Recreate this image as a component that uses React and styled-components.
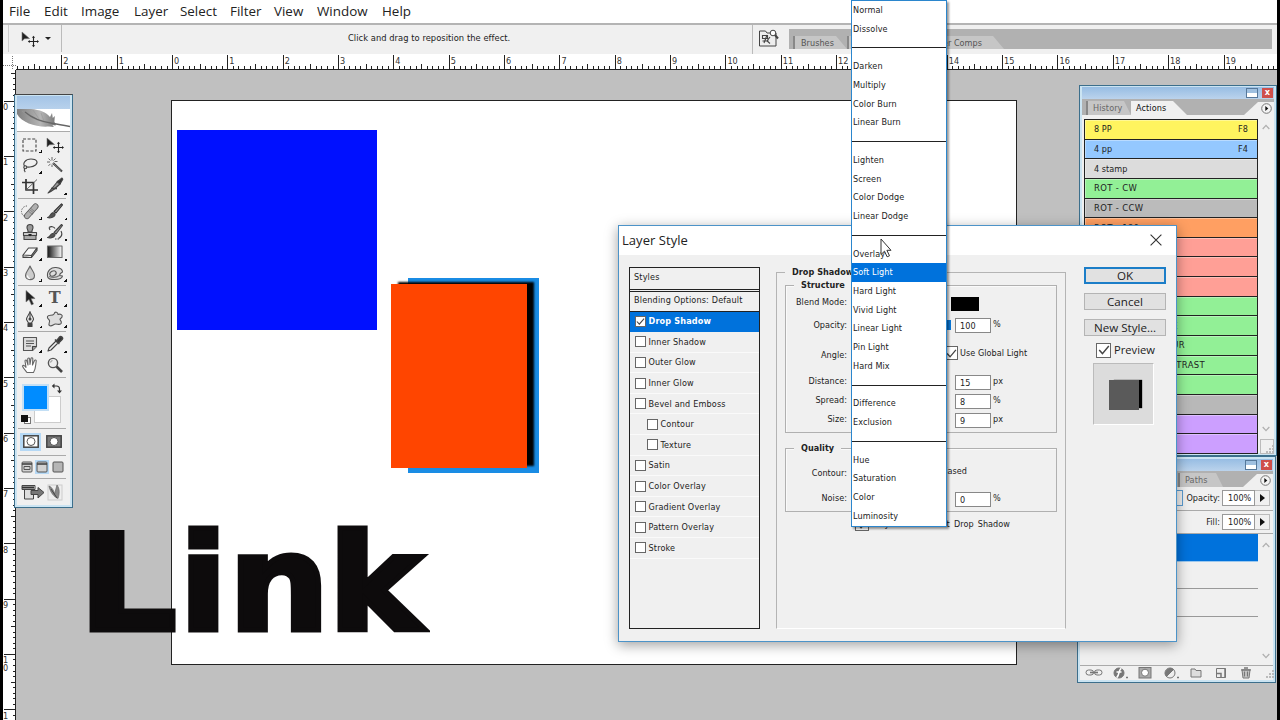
import styled, { createGlobalStyle, css } from 'styled-components';

const UI = "'DejaVu Sans Condensed', 'DejaVu Sans', Verdana, sans-serif";
const SEGOE = "'Open Sans', 'Noto Sans', sans-serif";

const menus = [
  ['File', 35], ['Edit', 37], ['Image', 53], ['Layer', 46], ['Select', 50],
  ['Filter', 44], ['View', 43], ['Window', 65], ['Help', 40],
];

const blendModes = [
  'Normal', 'Dissolve', null,
  'Darken', 'Multiply', 'Color Burn', 'Linear Burn', null,
  'Lighten', 'Screen', 'Color Dodge', 'Linear Dodge', null,
  'Overlay', 'Soft Light', 'Hard Light', 'Vivid Light', 'Linear Light', 'Pin Light', 'Hard Mix', null,
  'Difference', 'Exclusion', null,
  'Hue', 'Saturation', 'Color', 'Luminosity',
];

const effects = [
  { name: 'Drop Shadow', active: true },
  { name: 'Inner Shadow' },
  { name: 'Outer Glow' },
  { name: 'Inner Glow' },
  { name: 'Bevel and Emboss' },
  { name: 'Contour', nested: true },
  { name: 'Texture', nested: true },
  { name: 'Satin' },
  { name: 'Color Overlay' },
  { name: 'Gradient Overlay' },
  { name: 'Pattern Overlay' },
  { name: 'Stroke' },
];

const actions = [
  { name: '8 PP', hotkey: 'F8', color: '#fff45f' },
  { name: '4 pp', hotkey: 'F4', color: '#94c8ff' },
  { name: '4 stamp', color: '#dcdcdc' },
  { name: 'ROT - CW', wide: true, color: '#92f096' },
  { name: 'ROT - CCW', wide: true, color: '#bbbbbb' },
  { name: 'ROT - 180', wide: true, color: '#ff9f62' },
  { color: '#ff9f96' },
  { color: '#ff9f96' },
  { color: '#ff9f96' },
  { color: '#92f096' },
  { name: 'AUTO TONE', wide: true, end: 84, color: '#92f096' },
  { name: 'AUTO COLOUR', wide: true, end: 91, color: '#92f096' },
  { name: 'AUTO CONTRAST', wide: true, end: 111, color: '#92f096' },
  { color: '#92f096' },
  { color: '#b8b8b8' },
  { color: '#cc9fff' },
  { color: '#cc9fff' },
];

/* ---------- icons ---------- */

const Icon = ({ children, size = 18 }) => (
  <svg width={size} height={size} viewBox="0 0 18 18" fill="none" stroke="#444" strokeWidth="1.1" strokeLinejoin="round">
    {children}
  </svg>
);

const MarqueeIcon = () => <Icon><rect x="2" y="3" width="13" height="12" strokeDasharray="3 1.6" /></Icon>;

const MoveIcon = () => (
  <Icon>
    <path d="M1 2v9l2.500-2.200L8.500 8.500z" fill="#222" stroke="#777" strokeWidth=".6" />
    <path d="M12.500 7v9M8 11.500h9" stroke="#222" />
    <path d="M12.500 5.800l1.600 2h-3.200zM12.500 17.200l1.600-2h-3.200zM6.800 11.500l2-1.600v3.200zM18 11.500l-2-1.600v3.200z" fill="#222" stroke="none" />
  </Icon>
);

const LassoIcon = () => (
  <Icon>
    <path d="M4 10.500C1 7.500 4.500 3 10 3c6 0 7.500 3.500 4.500 6-3 2.300-8 2.800-10.500 1.200" stroke="#444" />
    <circle cx="4.300" cy="11.200" r="1.500" fill="#ddd" />
    <path d="M3.500 12.800c-.5 1-.4 2 .8 3.200" />
  </Icon>
);

const WandIcon = () => (
  <Icon>
    <path d="M7 7l9 8.500" stroke="#333" strokeWidth="2" />
    <path d="M7 7l8.500 8" stroke="#bbb" strokeWidth=".6" />
    <path d="M6 1v3.500M6 8.500V11M1 6h3M8.500 5.500h3M2.500 2.500l2 2M9.500 2.500l-2 2M4.500 7.800l-2 2" stroke="#555" strokeWidth=".9" />
  </Icon>
);

const CropIcon = () => (
  <Icon>
    <path d="M5 2v11h12M1 5.500h11.500V17" stroke="#333" strokeWidth="1.700" />
    <path d="M5 13L16 2.500" stroke="#555" strokeWidth=".9" />
  </Icon>
);

const SliceIcon = () => (
  <Icon>
    <path d="M2 16L12 4l2.500 2.500C11 10 7 13.500 2 16z" fill="#999" />
    <path d="M11 5l5-4 .8 1.200L14 7z" fill="#333" />
    <path d="M5 11.500h6" strokeWidth="1.600" />
  </Icon>
);

const HealIcon = () => (
  <Icon>
    <path d="M6 4a4.500 4.500 0 0 0 0 11" strokeDasharray="1.300 1.300" strokeWidth=".9" />
    <path d="M6 14L14.500 4.500" stroke="#555" strokeWidth="6" strokeLinecap="round" />
    <path d="M6 14L14.500 4.500" stroke="#b0b0b0" strokeWidth="4.500" strokeLinecap="round" />
    <path d="M8.500 7.500l4.500 3.800M7.300 9l4.500 3.800M9.700 6.300l4.300 3.700" stroke="#777" strokeWidth=".8" />
  </Icon>
);

const BrushIcon = () => (
  <Icon>
    <path d="M8 9.500L15.500 1.800l1 1L10 11z" fill="#999" stroke="#333" />
    <path d="M1.500 15.500c2.500-.3 2.500-3.500 5-4.700 1.500-.5 3 .9 2.500 2.300-1 2.600-5 3.200-7.500 2.400z" fill="#555" />
  </Icon>
);

const StampIcon = () => (
  <Icon>
    <path d="M7 9c.5-2-1.300-3-1-5 .3-3.300 5.700-3.300 6 0 .3 2-1.500 3-1 5z" fill="#999" />
    <path d="M2.500 9.500h13v3h-13z" fill="#ccc" />
    <path d="M3 13v3.500h12V13" fill="#aaa" />
    <path d="M7 11h4l-2 2.500z" fill="#222" stroke="none" />
  </Icon>
);

const HistoryBrushIcon = () => (
  <Icon>
    <path d="M8 9.500L15.500 1.500l1 1L10 11z" fill="#999" />
    <path d="M1.500 14.500c2.500-.3 2.500-3 5-3.900 1.500-.3 3 .9 2.300 2-1.200 2-5 2.700-7.300 1.900z" fill="#555" />
    <path d="M3 4.500c2-1.500 5-1 6 1M3 4.500l2.800-1M3 4.500l1 2.500M15 8c1.500 3 .5 6-2.500 7.500" stroke="#444" />
    <path d="M9 16h5" strokeDasharray="1.500 1" />
  </Icon>
);

const EraserIcon = () => (
  <Icon>
    <path d="M2 12l5.500-7H16l-5 7.500z" fill="#f7f7f7" />
    <path d="M2 12v2.500h8.500V12.300L16 5v2.500l-5.500 7" fill="#aaa" />
  </Icon>
);

const GradientIcon = () => (
  <Icon>
    <defs>
      <linearGradient id="toolGrad"><stop offset="0" stopColor="#111" /><stop offset="1" stopColor="#fff" /></linearGradient>
    </defs>
    <rect x="1.500" y="3" width="14.500" height="11.500" fill="url(#toolGrad)" stroke="#666" />
  </Icon>
);

const BlurIcon = () => (
  <Icon>
    <path d="M9 2c1.500 4 4.500 6 4.500 9.500 0 5.500-9 5.500-9 0C4.500 8 7.500 6 9 2z" fill="#ccc" stroke="#666" />
    <path d="M6.500 11.500c0 2 1 3 2.500 3.200" stroke="#fff" />
  </Icon>
);

const SpongeIcon = () => (
  <Icon>
    <path d="M1.500 12C1 7 5 3 10 3.500c4 .4 6.500 2 6.500 4.500-2 1-3 1.500-3 3.500l3 .5c-.5 3-4 3.500-8 3.500s-7-.5-7-3.500z" fill="#ddd" stroke="#555" />
    <ellipse cx="7" cy="9.500" rx="3.300" ry="2.400" stroke="#555" transform="rotate(-25 7 9.500)" />
    <path d="M3 12.500c4 1.500 7 1.500 10.500-1" stroke="#777" />
  </Icon>
);

const SelectIcon = () => <Icon><path d="M5 1.500v11.500l3-2.500 2.500 5.500 2-1-2.400-5.200 4-.3z" fill="#222" stroke="#777" strokeWidth=".6" /></Icon>;

const TypeIcon = () => <TypeGlyph>T</TypeGlyph>;

const PenIcon = () => (
  <Icon>
    <path d="M9 1.500c-.5 3-3.500 5-3.500 8L7.500 13h3l2-3.500c0-3-3-5-3.500-8z" fill="#eee" />
    <path d="M9 3v6M7 13.500h4v3H7z" fill="#444" />
    <circle cx="9" cy="9" r="1" fill="#222" />
  </Icon>
);

const ShapeIcon = () => (
  <Icon>
    <path d="M8 4c1-3 4-2 4 .5 2.500-1 5 .5 4 2.500-.5 1.200-2 1.300-2 2.300 0 1.300 2 2 1.200 4-1 2.300-3.700.5-5.700.7-2.200.3-4 3-6 1.500-1.700-1.500.7-3.500 0-5C2.800 9 .7 8.500 1.500 6.500 2.500 4 6.500 6.500 8 4z" fill="#ddd" stroke="#555" />
  </Icon>
);

const NoteIcon = () => (
  <Icon>
    <path d="M2.500 2.500h13v9l-4 4h-9z" fill="#ddd" stroke="#555" />
    <path d="M5 6h8M5 8.500h8M5 11h5" stroke="#555" />
    <path d="M11.500 15.500v-4h4" fill="#999" />
  </Icon>
);

const DropperIcon = () => (
  <Icon>
    <path d="M2 16l1-3 7-7 2 2-7 7z" fill="#eee" />
    <path d="M9 4.500l4.500 4.500M10.500 6l3-3.800c1.500-1.500 4 .5 2.500 2.300L12.500 8" fill="#333" strokeWidth="1.700" />
  </Icon>
);

const HandIcon = () => (
  <Icon>
    <path d="M6 16.500C4 14 2 12 1.500 10c.7-1.200 2-.5 3.500 1.300L4 5c0-1.200 1.500-1.300 1.800 0L7 9l-.3-6c0-1.300 1.700-1.300 1.900 0L9 8.500l1-6c.3-1.200 1.800-1 1.800.3L11.500 9l2-4.500c.6-1 2-.4 1.700.8C14.500 9 15 13 12.500 16.500z" fill="#fff" stroke="#666" />
  </Icon>
);

const ZoomIcon = () => (
  <Icon>
    <circle cx="7" cy="7" r="4.600" fill="#eee" stroke="#555" strokeWidth="1.400" />
    <path d="M10.500 10.500l5.500 5.500" strokeWidth="2.600" />
    <path d="M4.500 6.500a3 3 0 0 1 2-2" stroke="#999" />
  </Icon>
);

const Feather = () => (
  <svg width="54" height="21" viewBox="0 0 54 21">
    <defs>
      <linearGradient id="plume" x1="0" x2="1"><stop offset="0" stopColor="#7e7e7e" /><stop offset=".6" stopColor="#b5b5b5" /><stop offset="1" stopColor="#777" /></linearGradient>
    </defs>
    <path d="M0 0h14c9 .8 15 3 19 8l2-4 .8 5 2-2-.4 6c1 1 2 3 1 3.500l-3-.5 1.500 2-5-.5C20 18.500 5 14 0 5z" fill="url(#plume)" />
    <path d="M5 2c9 7 16 10 26 12M16 1l6 9M24 4l3 8M8 12l10-3" stroke="#999" fill="none" strokeWidth=".7" />
    <path d="M8 3c8 7 18 10 28 11.500 6 .8 12 2 17 3" stroke="#666" fill="none" strokeWidth="1.300" />
  </svg>
);

const SwapIcon = () => (
  <svg width="11" height="11" viewBox="0 0 11 11" fill="none" stroke="#333" strokeWidth="1.200">
    <path d="M2 3h3.500c2 0 3 1 3 3v3" />
    <path d="M3.500.5L.8 3l2.700 2.500zM6 7.500h5l-2.500 3z" fill="#333" stroke="none" />
  </svg>
);

const ModeIcon = ({ dark }) => (
  <svg width="16" height="13" viewBox="0 0 16 13">
    <rect x=".8" y=".8" width="14.400" height="11.400" fill={dark ? '#777' : '#fff'} stroke="#444" strokeWidth="1.500" />
    <circle cx="8" cy="6.500" r="4" fill="#fff" stroke="#555" />
  </svg>
);

const ScreenIcon = ({ kind }) => (
  <svg width="12" height="12" viewBox="0 0 12 12" fill="none" stroke="#555">
    <rect x="1" y="1" width="10" height="10" rx="1" fill={kind === 2 ? '#b5b5b5' : '#d2d2d2'} />
    {kind < 2 && <path d="M1 3h10" stroke="#444" strokeWidth="1.600" />}
    {kind === 0 && <path d="M3 5.500h6v3H3z" />}
  </svg>
);

const JumpIcon = () => (
  <svg width="24" height="17" viewBox="0 0 24 17" fill="#ddd" stroke="#444">
    <path d="M1 1.500h13v4H1zM3.500 5.500h9V15h-9z" />
    <path d="M1 3.500h12" stroke="#333" strokeWidth="2" />
    <path d="M10 6.500h7V3.500l6 5-6 5.500v-3.500h-7z" fill="#777" />
  </svg>
);

const ReadyIcon = () => (
  <svg width="16" height="17" viewBox="0 0 16 17">
    <rect x="1" y="1" width="14" height="15" fill="#eee" stroke="#ccc" />
    <path d="M2 2c3 1 5 5 5.500 8L10 1c3 4 2.500 9 1 13.500C7 13 3 8 2 2z" fill="#888" stroke="#666" strokeWidth=".7" />
    <path d="M4 5l6 9" stroke="#444" />
  </svg>
);

const FileBrowserIcon = () => (
  <svg width="21" height="19" viewBox="0 0 21 19" fill="none" stroke="#444">
    <path d="M1.500 17V2h6l1.500 2h9v13z" fill="#eee" />
    <path d="M4.500 6.500h5v3h-5zM4.500 12h6M9 6l-3 8M12 8l-3 4 3 2.500" strokeWidth="1.100" />
    <circle cx="15" cy="4" r="2.800" fill="#fff" />
    <path d="M17 6l3 3.500" strokeWidth="2" />
  </svg>
);

const CloseX = () => (
  <svg width="12" height="12" viewBox="0 0 12 12" stroke="#333" strokeWidth="1.100"><path d="M.6.6l10.800 10.800M11.400.6L.6 11.400" /></svg>
);

const Check = ({ size = 9 }) => (
  <svg width={size} height={size} viewBox="0 0 10 10" fill="none" stroke="#444" strokeWidth="1.200"><path d="M1 5l2.700 3L9 1.700" /></svg>
);

const Chevron = ({ down }) => (
  <svg width="8" height="6" viewBox="0 0 8 6" fill="none" stroke="#b0b0b0" strokeWidth="1.300">
    <path d={down ? 'M.7 1L4 4.600 7.300 1' : 'M.7 5L4 1.400 7.300 5'} />
  </svg>
);

const Triangle = ({ width = 5, height = 8 }) => (
  <svg width={width} height={height} viewBox="0 0 5 8"><path d="M0 0l5 4-5 4z" fill="#111" /></svg>
);

const FlyoutIcon = () => (
  <svg width="11" height="11" viewBox="0 0 11 11"><circle cx="5.500" cy="5.500" r="4.800" fill="#f4f4f4" stroke="#777" /><path d="M4.300 3l3 2.500-3 2.500z" fill="#111" /></svg>
);

const Grip = () => (
  <svg width="12" height="12" viewBox="0 0 12 12" fill="#bbb"><path d="M9 3h2v2H9zM6 6h2v2H6zM9 6h2v2H9zM3 9h2v2H3zM6 9h2v2H6zM9 9h2v2H9z" /></svg>
);

const layerIcons = [
  <><rect x="1" y="6" width="7.500" height="5" rx="2.500" /><rect x="9.500" y="6" width="7.500" height="5" rx="2.500" /><path d="M5 8.500h8" strokeWidth="1.600" /></>,
  <><circle cx="9" cy="9" r="5" fill="#777" /><path d="M11.500 4.500c-3 0-2 8-5 9M6.500 8h5" stroke="#fff" strokeWidth="1.500" /><path d="M16 13.500h2" strokeWidth="1.600" /></>,
  <><rect x="3" y="3.500" width="12" height="10.500" fill="#aaa" /><circle cx="9" cy="8.700" r="3.500" fill="#fff" /></>,
  <><circle cx="9" cy="9" r="5" fill="#eee" /><path d="M5.500 12.500l7-7a5 5 0 0 0-7 7z" fill="#777" /><path d="M16 13.500h2" strokeWidth="1.600" /></>,
  <path d="M4 5h4l1 1.500h5V13H4z" fill="#ddd" />,
  <><path d="M4.500 4.500h9v9h-9z" fill="#eee" /><path d="M4.500 9.500H9v4M13 13.500v-9" strokeWidth="1.500" /></>,
  <><path d="M5 6h8l-1 8H6z" fill="#ccc" /><path d="M4 5.800h10M7 4h4M7.500 7.500v5M10.500 7.500v5" strokeWidth="1.300" /></>,
];

const tools = [
  [[MarqueeIcon, 1], [MoveIcon, 0], [LassoIcon, 1], [WandIcon, 0], [CropIcon, 0], [SliceIcon, 1]],
  [[HealIcon, 1], [BrushIcon, 1], [StampIcon, 1], [HistoryBrushIcon, 1], [EraserIcon, 1], [GradientIcon, 1], [BlurIcon, 1], [SpongeIcon, 1]],
  [[SelectIcon, 1], [TypeIcon, 1], [PenIcon, 1], [ShapeIcon, 1]],
  [[NoteIcon, 1], [DropperIcon, 1], [HandIcon, 0], [ZoomIcon, 0]],
];

/* ---------- rulers ---------- */

const STEP = 5.534;

const HorizontalRuler = () => {
  const ticks = [];
  for (let i = -28; i < 200; i++) {
    const x = 169.5 + i * STEP;
    const len = i % 10 === 0 ? 15 : i % 5 === 0 ? 6 : 4;
    ticks.push(<path key={i} d={`M${x.toFixed(1)} ${16 - len}V16`} />);
    if (i % 10 === 0) ticks.push(<text key={`t${i}`} x={x + 1.5} y="10">{Math.abs(i / 10)}</text>);
  }
  return (
    <RulerSvg width="1274" height="16">
      <path d="M0 11.500h13M9.500 2v13" strokeDasharray="1 1" stroke="#777" />
      {ticks}
      <path d="M13 15.500h1261" strokeWidth="1" />
    </RulerSvg>
  );
};

const VerticalRuler = () => {
  const ticks = [];
  for (let i = -5; i < 112; i++) {
    const y = 31 + i * STEP;
    const len = i % 10 === 0 ? 12 : i % 5 === 0 ? 5 : 3;
    ticks.push(<path key={i} d={`M${13 - len} ${y.toFixed(1)}H13`} />);
    if (i % 10 === 0) {
      String(i / 10).split('').forEach((d, n) => {
        ticks.push(<text key={`t${i}-${n}`} x="0" y={y + 9 + n * 8}>{d}</text>);
      });
    }
  }
  return (
    <RulerSvg width="13" height="650">
      {ticks}
      <path d="M12.500 0v650" />
    </RulerSvg>
  );
};

/* ---------- panels ---------- */

const Toolbox = () => (
  <ToolWindow>
    <ToolTitle />
    <FeatherBox><Feather /></FeatherBox>
    {tools.map((group, i) => (
      <ToolSection key={i}>
        {group.map(([Tool, corner], n) => (
          <ToolCell key={n} $corner={corner}><Tool /></ToolCell>
        ))}
      </ToolSection>
    ))}
    <Swatches>
      <BackSwatch />
      <FrontSwatch />
      <SwapBox><SwapIcon /></SwapBox>
      <DefaultBox />
    </Swatches>
    <ModeRow $height={27}>
      <ModeCell $width={21} $on><ModeIcon /></ModeCell>
      <ModeCell $width={21}><ModeIcon dark /></ModeCell>
    </ModeRow>
    <ModeRow $height={23}>
      <ModeCell $width={14}><ScreenIcon kind={0} /></ModeCell>
      <ModeCell $width={14} $on><ScreenIcon kind={1} /></ModeCell>
      <ModeCell $width={14}><ScreenIcon kind={2} /></ModeCell>
    </ModeRow>
    <ModeRow $height={27} $last><JumpIcon /><ReadyIcon /></ModeRow>
  </ToolWindow>
);

const PanelTitle = () => (
  <PanelBar>
    <MinButton />
    <RedButton>x</RedButton>
  </PanelBar>
);

const ActionsPanel = () => (
  <ActionsWindow>
    <PanelTitle />
    <TabStrip>
      <PanelTab $width={45}>History</PanelTab>
      <PanelTab $width={56} $active>Actions</PanelTab>
      <TabEnd><FlyoutIcon /></TabEnd>
    </TabStrip>
    <ActionsBody>
      <ActionList>
        {actions.map((a, i) => (
          <ActionRow key={i} $color={a.color}>
            <ActionName $end={a.end} $wide={a.wide}>{a.name}</ActionName>
            <span>{a.hotkey}</span>
          </ActionRow>
        ))}
      </ActionList>
      <ScrollTrack>
        <Chevron />
        <Chevron down />
        <GripBox><Grip /></GripBox>
      </ScrollTrack>
    </ActionsBody>
  </ActionsWindow>
);

const LayersPanel = () => (
  <LayersWindow>
    <PanelTitle />
    <TabStrip $layers>
      <PanelTab $width={45}>Paths</PanelTab>
      <TabEnd><FlyoutIcon /></TabEnd>
    </TabStrip>
    <LayerOption><ModeSelect />Opacity:<Percent>100%</Percent><PercentArrow><Triangle /></PercentArrow></LayerOption>
    <LayerOption>Fill:<Percent>100%</Percent><PercentArrow><Triangle /></PercentArrow></LayerOption>
    <LayersBody>
      <LayerList>
        <LayerRow $active />
        <LayerRow />
        <LayerRow />
      </LayerList>
      <LayerTrack><Chevron /><Chevron down /></LayerTrack>
    </LayersBody>
    <LayerFooter>
      {layerIcons.map((icon, i) => (
        <svg key={i} width="18" height="16" viewBox="0 1 18 16" fill="none" stroke="#777">{icon}</svg>
      ))}
      <Grip />
    </LayerFooter>
  </LayersWindow>
);

const Param = ({ label, value, unit, height }) => (
  <ParamRow $height={height}>
    <ParamLabel>{label}:</ParamLabel>
    <ParamValue><Field>{value}</Field><Unit>{unit}</Unit></ParamValue>
  </ParamRow>
);

const LayerStyle = () => (
  <Dialog>
    <DialogTitle>Layer Style<CloseX /></DialogTitle>
    <DialogBody>
      <StyleList>
        <StyleHead>Styles</StyleHead>
        <StyleBlend>Blending Options: Default</StyleBlend>
        {effects.map(e => (
          <EffectRow key={e.name} $active={e.active} $nested={e.nested}>
            <Box $size={11}>{e.active && <Check />}</Box>
            {e.name}
          </EffectRow>
        ))}
      </StyleList>

      <OuterGroup>
        <Legend $left={8}>Drop Shadow</Legend>
        <Group $top={13} $height={148}>
          <Legend $left={8}>Structure</Legend>
          <ParamRow $height={22} $top={5}>
            <ParamLabel>Blend Mode:</ParamLabel>
            <ColorWell />
          </ParamRow>
          <Param label="Opacity" value="100" unit="%" height={23} />
          <ParamRow $height={37}>
            <ParamLabel>Angle:</ParamLabel>
            <SliderThumb />
            <GlobalLight><Box $size={14}><Check size={11} /></Box>Use Global Light</GlobalLight>
          </ParamRow>
          <Param label="Distance" value="15" unit="px" height={16} />
          <Param label="Spread" value="8" unit="%" height={22} />
          <Param label="Size" value="9" unit="px" height={16} />
        </Group>
        <Group $top={16} $height={64}>
          <Legend $left={8}>Quality</Legend>
          <ParamRow $height={30} $top={7}>
            <ParamLabel $drop={3}>Contour:</ParamLabel>
            <AntiAliased>Anti-aliased</AntiAliased>
          </ParamRow>
          <Param label="Noise" value="0" unit="%" height={24} />
        </Group>
        <KnockOut><Box $size={14}><Check size={11} /></Box><span>Layer Knocks Out Drop Shadow</span></KnockOut>
      </OuterGroup>

      <ButtonColumn>
        <DialogButton $primary>OK</DialogButton>
        <DialogButton>Cancel</DialogButton>
        <DialogButton>New Style...</DialogButton>
        <PreviewToggle><Box $size={15}><Check size={12} /></Box>Preview</PreviewToggle>
        <PreviewWell><PreviewTile /></PreviewWell>
      </ButtonColumn>
    </DialogBody>
  </Dialog>
);

const App = () => (
  <Screen>
    <GlobalStyle />
    <MenuBar>{menus.map(([name, width]) => <MenuItem key={name} $width={width}>{name}</MenuItem>)}</MenuBar>
    <OptionsBar>
      <OptionTool><MoveIcon /><Caret /></OptionTool>
      <Hint>Click and drag to reposition the effect.</Hint>
      <BrowserButton><FileBrowserIcon /></BrowserButton>
      <PaletteWell>
        <WellTab $width={54}>Brushes</WellTab>
        <WellTab $width={157} $right>Layer Comps</WellTab>
      </PaletteWell>
    </OptionsBar>
    <HorizontalRuler />
    <Workspace>
      <VerticalRuler />
      <Desk>
        <Artboard>
          <BlueSquare />
          <LightBlueRect />
          <OrangeRect />
        </Artboard>
      </Desk>
    </Workspace>
    <Toolbox />
    <ActionsPanel />
    <LayersPanel />
    <Title>
      <Letter $gap={9} $stretch={1.09}>L</Letter>
      <Letter $gap={0.6}>i</Letter>
      <Letter $gap={-1.3}>n</Letter>
      <Letter $gap={0}>k</Letter>
    </Title>
    <LayerStyle />
    <BlendMenu>
      {blendModes.map((mode, i) => mode
        ? <BlendItem key={i} $active={mode === 'Soft Light'}>{mode}</BlendItem>
        : <BlendRule key={i} />)}
    </BlendMenu>
    <Cursor>
      <svg width="12" height="20" viewBox="0 0 12 20"><path d="M1 1v15.500l3.500-3.300 2.600 5.600 2.400-1-2.600-5.500H11z" fill="#fff" stroke="#333" /></svg>
    </Cursor>
  </Screen>
);

export default App;

/* ---------- styles ---------- */

const GlobalStyle = createGlobalStyle`
  * { box-sizing: border-box; }
  body { margin: 0; background: #000; overflow: hidden; }
  svg { display: block; flex: none; }
`;

const Screen = styled.div`
  position: relative;
  display: flex;
  flex-direction: column;
  width: 1280px;
  height: 720px;
  padding: 0 3px;
  overflow: hidden;
  background: #000;
  color: #222;
  font: 9px/12px ${UI};
  letter-spacing: .05px;
  white-space: nowrap;
`;

const MenuBar = styled.div`
  display: flex;
  align-items: flex-start;
  height: 23px;
  padding-left: 6px;
  background: #fff;
`;

const MenuItem = styled.div`
  width: ${p => p.$width}px;
  font: 13.4px/22px ${SEGOE};
  letter-spacing: 0;
  color: #222;
`;

const OptionsBar = styled.div`
  display: flex;
  height: 31px;
  background: #f0f0f0;
  border-top: 2px solid #b4b4b4;
`;

const OptionTool = styled.div`
  display: flex;
  align-items: center;
  gap: 6px;
  width: 59px;
  margin-bottom: 2px;
  padding-left: 18px;
  border-right: 1px solid #bbb;
  background: linear-gradient(90deg, transparent 5px, #ccc 5px, #ccc 6px, transparent 6px);
`;

const Caret = styled.i`
  border: 3px solid transparent;
  border-top: 3px solid #222;
  border-bottom: 0;
`;

const Hint = styled.div`
  flex: 1;
  padding: 7px 0 0 286px;
  border-right: 1px solid #bbb;
  font-size: 9.25px;
`;

const BrowserButton = styled.div`
  width: 36px;
  padding: 4px 0 0 5px;
`;

const PaletteWell = styled.div`
  display: flex;
  align-items: flex-end;
  width: 483px;
  height: 20px;
  margin: 4px 5px 0 0;
  padding-left: 4px;
  background: #b1b1b1;
`;

const WellTab = styled.div`
  flex: none;
  width: ${p => p.$width}px;
  height: 13px;
  padding: 1px 0 0 6px;
  background: #c6c6c6;
  border-left: 2px solid #888;
  clip-path: polygon(0 0, calc(100% - 11px) 0, 100% 100%, 0 100%);
  color: #555;
  ${p => p.$right && css`
    padding-right: 22px;
    text-align: right;
  `}
`;

const RulerSvg = styled.svg`
  background: #fff;
  stroke: #222;
  stroke-width: 1;
  shape-rendering: crispEdges;
  text {
    font: 9px ${UI};
    fill: #333;
    stroke: none;
  }
`;

const Workspace = styled.div`
  display: flex;
  flex: 1;
  background: #c0c0c0;
`;

const Desk = styled.div`
  flex: 1;
  padding: 30px 0 0 155px;
`;

const Artboard = styled.div`
  position: relative;
  width: 846px;
  height: 565px;
  background: #fff;
  border: 1px solid #222;
`;

const BlueSquare = styled.div`
  position: absolute;
  left: 5px;
  top: 29px;
  width: 200px;
  height: 200px;
  background: #0010ff;
`;

const LightBlueRect = styled.div`
  position: absolute;
  left: 236px;
  top: 177px;
  width: 131px;
  height: 195px;
  background: #1a8ce4;
`;

const OrangeRect = styled.div`
  position: absolute;
  left: 219px;
  top: 183px;
  width: 136px;
  height: 184px;
  background: #ff4500;
  box-shadow: 7px -2px 2px 0 #000;
`;

const frame = css`
  position: absolute;
  display: flex;
  flex-direction: column;
  background: #f0f0f0;
  border: 1px solid #3c6f8c;
  box-shadow: inset 0 0 0 2px #cbe4f2;
`;

const ToolWindow = styled.div`
  ${frame}
  left: 14px;
  top: 94px;
  width: 59px;
  height: 414px;
  padding: 1px 2px;
  border-top-color: #444;
`;

const ToolTitle = styled.div`
  height: 13px;
  background: linear-gradient(#a4c4e6, #b7d1ec);
`;

const FeatherBox = styled.div`
  height: 23px;
  background: #fff;
  border-bottom: 1px solid #aaa;
  overflow: hidden;
`;

const ToolSection = styled.div`
  display: grid;
  grid-template-columns: 24.5px 24.5px;
  grid-auto-rows: 20.6px;
  margin: 0 4px 0 1px;
  padding: 2.4px 0 1.4px;
  border-bottom: 1px solid #aaa;
`;

const ToolCell = styled.div`
  display: flex;
  align-items: center;
  justify-content: center;
  ${p => p.$corner ? css`
    background: linear-gradient(135deg, transparent 50%, #111 50%) no-repeat 21px 16px / 3px 3px;
  ` : ''}
`;

const TypeGlyph = styled.b`
  font: bold 16px/18px 'DejaVu Serif', serif;
  color: #555;
`;

const Swatches = styled.div`
  position: relative;
  height: 51px;
  margin: 0 4px 0 1px;
  border-bottom: 1px solid #aaa;
`;

const FrontSwatch = styled.div`
  position: absolute;
  left: 4px;
  top: 6px;
  width: 27px;
  height: 27px;
  background: #008cff;
  border: 2px solid #c3dff5;
`;

const BackSwatch = styled.div`
  position: absolute;
  left: 16px;
  top: 18px;
  width: 27px;
  height: 27px;
  background: #fff;
  border: 1px solid #ccc;
`;

const SwapBox = styled.div`
  position: absolute;
  left: 33px;
  top: 5px;
`;

const DefaultBox = styled.div`
  position: absolute;
  left: 3px;
  top: 37px;
  width: 7px;
  height: 7px;
  background: #111;
  box-shadow: 3px 2px 0 -1px #fff, 3px 2px 0 0 #777;
`;

const ModeRow = styled.div`
  display: flex;
  align-items: center;
  justify-content: space-evenly;
  height: ${p => p.$height}px;
  margin: 0 4px 0 1px;
  border-bottom: ${p => p.$last ? 0 : '1px solid #aaa'};
`;

const ModeCell = styled.div`
  display: flex;
  align-items: center;
  justify-content: center;
  width: ${p => p.$width}px;
  height: ${p => p.$width > 14 ? 18 : 14}px;
  background: ${p => p.$on ? '#b5d8f5' : 'transparent'};
`;

const ActionsWindow = styled.div`
  ${frame}
  left: 1079px;
  top: 85px;
  width: 198px;
  height: 371px;
  padding: 1px 2px;
`;

const PanelBar = styled.div`
  display: flex;
  align-items: center;
  justify-content: flex-end;
  gap: 4px;
  height: 12px;
  padding-right: 1px;
  background: linear-gradient(#97bde3, #bbd3ec);
`;

const MinButton = styled.div`
  width: 12px;
  height: 10px;
  background: linear-gradient(#9fc0e0 55%, #fff 55%);
  border: 1px solid #56789a;
`;

const RedButton = styled.div`
  width: 11px;
  height: 10px;
  background: #cf4f4b;
  color: #fff;
  font: bold 9px/8px ${UI};
  text-align: center;
`;

const TabStrip = styled.div`
  display: flex;
  align-items: flex-end;
  height: 16px;
  padding-left: ${p => p.$layers ? 98 : 4}px;
  background: #b1b1b1;
`;

const PanelTab = styled.div`
  width: ${p => p.$width}px;
  height: 14px;
  padding: 1px 0 0 5px;
  background: ${p => p.$active ? '#f0f0f0' : '#c6c6c6'};
  border-left: ${p => p.$active ? 0 : '2px solid #888'};
  clip-path: polygon(0 0, calc(100% - ${p => p.$active ? 14 : 7}px) 0, 100% 100%, 0 100%);
  color: ${p => p.$active ? '#111' : '#666'};
  letter-spacing: .1px;
`;

const TabEnd = styled.div`
  display: flex;
  justify-content: flex-end;
  width: 30px;
  height: 13px;
  margin-left: auto;
  padding: 1px 2px 0 0;
  background: #f0f0f0;
  clip-path: polygon(14px 0, 100% 0, 100% 100%, 0 100%);
`;

const ActionsBody = styled.div`
  display: flex;
  flex: 1;
  padding: 4px 0 0 2px;
`;

const ActionList = styled.div`
  width: 174px;
  border: 1px solid #222;
  border-bottom: 0;
`;

const ActionRow = styled.div`
  display: flex;
  align-items: center;
  justify-content: space-between;
  height: 19.65px;
  padding: 0 9px;
  background: ${p => p.$color};
  border-bottom: 1px solid #222;
  box-shadow: inset 1px 1px 0 rgba(255, 255, 255, .35);
`;

const ActionName = styled.span`
  width: ${p => p.$end ? `${p.$end}px` : 'auto'};
  direction: ${p => p.$end ? 'rtl' : 'ltr'};
  font-size: ${p => p.$wide ? '9.4px' : 'inherit'};
  letter-spacing: ${p => p.$wide ? '.35px' : 'inherit'};
`;

const ScrollTrack = styled.div`
  display: flex;
  flex: 1;
  flex-direction: column;
  align-items: center;
  padding-top: 5px;
  svg:nth-of-type(2) { margin-top: auto; margin-bottom: 7px; }
`;

const GripBox = styled.div`
  align-self: flex-end;
  width: 14px;
  height: 15px;
  padding: 2px 0 0 2px;
  border: 1px solid #bbb;
`;

const LayersWindow = styled.div`
  ${frame}
  left: 1077px;
  top: 456px;
  width: 199px;
  height: 227px;
  padding: 2px;
`;

const LayerOption = styled.div`
  display: flex;
  align-items: center;
  justify-content: flex-end;
  height: 23.5px;
  padding-right: 3px;
  border-bottom: 1px solid #aaa;
`;

const ModeSelect = styled.i`
  width: 90px;
  height: 16px;
  margin-right: 3px;
  border: 1px solid #5b9bd0;
`;

const Percent = styled.span`
  width: 33px;
  height: 16px;
  margin-left: 2px;
  padding: 1px 0 0 5px;
  background: #fff;
  border: 1px solid #999;
`;

const PercentArrow = styled.span`
  display: flex;
  align-items: center;
  justify-content: center;
  width: 15px;
  height: 16px;
  border: 1px solid #bbb;
  border-left: 0;
`;

const LayersBody = styled.div`
  display: flex;
  flex: 1;
`;

const LayerList = styled.div`
  flex: 1;
`;

const LayerRow = styled.div`
  height: 27.5px;
  background: ${p => p.$active ? '#0072dc' : 'transparent'};
  border-bottom: 1px solid ${p => p.$active ? '#9cc8ee' : '#999'};
`;

const LayerTrack = styled.div`
  display: flex;
  flex-direction: column;
  justify-content: space-between;
  align-items: center;
  width: 15px;
  padding: 8px 0 6px;
`;

const LayerFooter = styled.div`
  display: flex;
  align-items: center;
  gap: 7.400px;
  height: 15px;
  padding-left: 5px;
  border-top: 1px solid #aaa;
  svg:last-child { margin-left: auto; }
`;

const Title = styled.div`
  position: absolute;
  left: 79px;
  top: 499px;
  display: flex;
  font: bold 134px/170px 'DejaVu Sans', Verdana, sans-serif;
  color: #0d0b0c;
  -webkit-text-stroke: 5px #0d0b0c;
  transform: scaleX(1.06);
  transform-origin: 0 0;
`;

const Letter = styled.span`
  margin-right: ${p => p.$gap}px;
  transform: scaleX(${p => p.$stretch || 1});
  transform-origin: 9px 0;
`;

const Dialog = styled.div`
  position: absolute;
  left: 618px;
  top: 225px;
  width: 559px;
  height: 417px;
  background: #f0f0f0;
  border: 1px solid #4c93c8;
  box-shadow: 0 3px 12px rgba(0, 0, 0, .38);
`;

const DialogTitle = styled.div`
  display: flex;
  align-items: center;
  justify-content: space-between;
  height: 29px;
  padding: 0 14px 1px 3px;
  background: #fff;
  font: 13px/20px ${SEGOE};
`;

const DialogBody = styled.div`
  display: flex;
  align-items: flex-start;
  padding: 12px 0 0 10px;
`;

const StyleList = styled.div`
  width: 131px;
  height: 362px;
  border: 1px solid #222;
  letter-spacing: .17px;
`;

const StyleHead = styled.div`
  height: 24px;
  padding: 3px 0 0 4px;
  border-bottom: 3px double #222;
`;

const StyleBlend = styled.div`
  height: 19.5px;
  padding: 2px 0 0 4px;
  border-bottom: 1px solid #222;
`;

const Box = styled.span`
  display: flex;
  flex: none;
  align-items: center;
  justify-content: center;
  width: ${p => p.$size}px;
  height: ${p => p.$size}px;
  background: #fff;
  border: 1px solid #666;
`;

const EffectRow = styled.div`
  display: flex;
  align-items: center;
  gap: 2.500px;
  height: 20.6px;
  padding-left: ${p => p.$nested ? 17 : 5}px;
  border-bottom: 1px solid #fafafa;
  ${p => p.$active && css`
    padding-bottom: 1px;
    background: #0072dc;
    color: #fff;
    font-weight: bold;
    border-bottom: 0;
  `}
`;

const OuterGroup = styled.div`
  position: relative;
  width: 290px;
  height: 357px;
  margin: 5px 0 0 16px;
  padding: 0 8px;
  border: 1px solid #b4b4b4;
  border-bottom-color: #fff;
`;

const Group = styled.div`
  position: relative;
  height: ${p => p.$height}px;
  margin-top: ${p => p.$top - 1}px;
  border: 1px solid #b0b0b0;
  box-shadow: inset 1px 1px 0 #fafafa;
`;

const Legend = styled.div`
  position: absolute;
  top: -7px;
  left: ${p => p.$left}px;
  padding: 0 7px;
  background: #f0f0f0;
  font-weight: bold;
`;

const ParamRow = styled.div`
  display: flex;
  align-items: center;
  height: ${p => p.$height}px;
  margin-top: ${p => p.$top || 0}px;
`;

const ParamLabel = styled.div`
  width: 61px;
  padding-top: ${p => p.$drop || 0}px;
  text-align: right;
`;

const ParamValue = styled.div`
  display: flex;
  gap: 2px;
  margin-left: 108px;
`;

const Field = styled.span`
  width: 36px;
  height: 15px;
  margin-top: 2px;
  padding: 1px 0 0 4px;
  background: #fff;
  border: 1px solid #888;
`;

const Unit = styled.span`
  padding-top: 2px;
`;

const ColorWell = styled.div`
  width: 28px;
  height: 14px;
  margin: 4px 0 0 104px;
  background: #000;
`;

const SliderThumb = styled.div`
  align-self: flex-start;
  width: 8px;
  height: 10px;
  margin: -16px 0 0 96px;
  background: #0a78d7;
`;

const GlobalLight = styled.div`
  display: flex;
  align-items: center;
  gap: 2px;
  margin: 0 0 3px -7px;
`;

const AntiAliased = styled.div`
  width: 120px;
  text-align: right;
`;

const KnockOut = styled.div`
  display: flex;
  align-items: center;
  width: 155px;
  margin: 5px 0 0 70px;
  word-spacing: 1.5px;
  span:last-child { flex: 1; text-align: right; }
`;

const ButtonColumn = styled.div`
  display: flex;
  flex-direction: column;
  width: 82px;
  margin-left: 18px;
  letter-spacing: 0;
`;

const DialogButton = styled.div`
  height: 17px;
  margin-bottom: 9.200px;
  background: #e1e1e1;
  border: ${p => p.$primary ? '2px solid #1c7ec8' : '1px solid #b4b4b4'};
  font: 11.6px/${p => p.$primary ? 13 : 15}px ${SEGOE};
  text-align: center;
`;

const PreviewToggle = styled.div`
  display: flex;
  align-items: center;
  gap: 3px;
  margin: -3px 0 0 12px;
  font: 11.2px/14px ${SEGOE};
`;

const PreviewWell = styled.div`
  width: 61px;
  height: 62px;
  margin: 5px 0 0 9px;
  padding: 16px 15px;
  background: #dcdcdc;
  border: 1px solid #bbb;
  border-right-color: #fff;
  border-bottom-color: #fff;
`;

const PreviewTile = styled.div`
  width: 30px;
  height: 30px;
  background: #5a5a5a;
  box-shadow: 4px -1px 1px -1px #000, 3px -1px 0 -1px #111;
`;

const BlendMenu = styled.div`
  position: absolute;
  left: 851px;
  top: 0;
  width: 96px;
  height: 527px;
  background: #fff;
  border: 1px solid #2b86cd;
  box-shadow: 2px 2px 2px rgba(0, 0, 0, .4);
  letter-spacing: .1px;
`;

const BlendItem = styled.div`
  height: 18.74px;
  padding-left: 1px;
  line-height: 19.4px;
  background: ${p => p.$active ? '#0072dc' : 'transparent'};
  color: ${p => p.$active ? '#fff' : '#222'};
`;

const BlendRule = styled.div`
  height: 18.74px;
  background: linear-gradient(#222, #222) no-repeat 0 9px / 100% 1px;
`;

const Cursor = styled.div`
  position: absolute;
  left: 880px;
  top: 238px;
`;
